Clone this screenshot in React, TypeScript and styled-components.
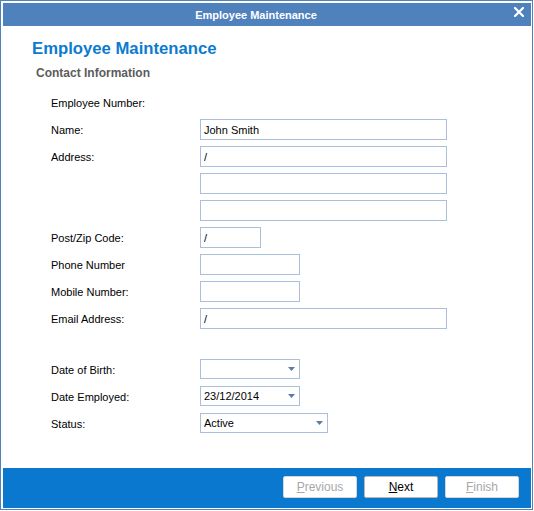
import React from 'react';
import styled, { createGlobalStyle } from 'styled-components';

const GlobalStyle = createGlobalStyle`
	html, body {
		margin: 0;
		padding: 0;
		background: #ffffff;
	}
	* {
		box-sizing: border-box;
	}
`;

const fields = [
	{ label: 'Employee Number:', type: 'none' },
	{ label: 'Name:', type: 'text', width: 247, value: 'John Smith' },
	{ label: 'Address:', type: 'text', width: 247, value: '/' },
	{ label: '', type: 'text', width: 247, value: '' },
	{ label: '', type: 'text', width: 247, value: '' },
	{ label: 'Post/Zip Code:', type: 'text', width: 61, value: '/' },
	{ label: 'Phone Number', type: 'text', width: 100, value: '' },
	{ label: 'Mobile Number:', type: 'text', width: 100, value: '' },
	{ label: 'Email Address:', type: 'text', width: 247, value: '/' },
];

const combos = [
	{ label: 'Date of Birth:', width: 100, value: '' },
	{ label: 'Date Employed:', width: 100, value: '23/12/2014' },
	{ label: 'Status:', width: 128, value: 'Active' },
];

export default function App() {
	return (
		<>
			<GlobalStyle />
			<Frame>
				<TitleBar>
					<TitleText>Employee Maintenance</TitleText>
					<CloseButton aria-label="Close">
						<svg width="10" height="10" viewBox="0 0 10 10">
							<path d="M1 1 L9 9 M9 1 L1 9" stroke="#ffffff" strokeWidth="2.2" strokeLinecap="square" />
						</svg>
					</CloseButton>
				</TitleBar>
				<Body>
					<Heading>Employee Maintenance</Heading>
					<SubHeading>Contact Information</SubHeading>
					<Form $top={12}>
						{fields.map((f, i) => (
							<React.Fragment key={i}>
								<Label>{f.label}</Label>
								<Cell>
									{f.type === 'text' && (
										<TextBox $width={f.width!} defaultValue={f.value} readOnly />
									)}
								</Cell>
							</React.Fragment>
						))}
					</Form>
					<Form $top={30}>
						{combos.map((c, i) => (
							<React.Fragment key={'c' + i}>
								<Label>{c.label}</Label>
								<Cell>
									<Combo $width={c.width}>
										<ComboText>{c.value}</ComboText>
										<ComboArrow>
											<svg width="7" height="4" viewBox="0 0 7 4">
												<path d="M0 0 H7 L3.5 4 Z" fill="#5d7ba6" />
											</svg>
										</ComboArrow>
									</Combo>
								</Cell>
							</React.Fragment>
						))}
					</Form>
				</Body>
				<Footer>
					<WizardButton disabled>
						<u>P</u>revious
					</WizardButton>
					<WizardButton>
						<u>N</u>ext
					</WizardButton>
					<WizardButton disabled>
						<u>F</u>inish
					</WizardButton>
				</Footer>
			</Frame>
		</>
	);
}

const Frame = styled.div`
	width: 533px;
	height: 510px;
	border: 1px solid #4f81bd;
	padding: 2px 1px 1px 2px;
	display: flex;
	flex-direction: column;
	background: #ffffff;
`;

const TitleBar = styled.div`
	position: relative;
	height: 23px;
	flex: none;
	background: #4f81bd;
	display: flex;
	align-items: center;
	justify-content: center;
	padding-right: 22px;
`;

const TitleText = styled.div`
	font-family: 'Liberation Sans', Arial, sans-serif;
	font-weight: bold;
	font-size: 11px;
	color: #ffffff;
`;

const CloseButton = styled.div`
	position: absolute;
	right: 7px;
	top: 4px;
	width: 10px;
	height: 10px;
	display: flex;
`;

const Body = styled.div`
	flex: 1;
	display: flex;
	flex-direction: column;
	padding: 13px 0 0 29px;
`;

const Heading = styled.div`
	font-family: 'Liberation Sans', Arial, sans-serif;
	font-weight: bold;
	font-size: 16.7px;
	line-height: 20px;
	color: #0b7bd0;
`;

const SubHeading = styled.div`
	margin: 7px 0 0 4px;
	font-family: 'Liberation Sans', Arial, sans-serif;
	font-weight: bold;
	font-size: 12px;
	line-height: 14px;
	color: #5c5c5c;
`;

const Form = styled.div<{ $top: number }>`
	margin: ${(p) => p.$top}px 0 0 19px;
	display: grid;
	grid-template-columns: 149px 1fr;
	grid-auto-rows: 21px;
	row-gap: 6px;
`;

const Label = styled.div`
	display: flex;
	align-items: center;
	font-family: 'Liberation Sans', Arial, sans-serif;
	font-size: 11px;
	color: #000000;
`;

const Cell = styled.div`
	display: flex;
	align-items: stretch;
`;

const TextBox = styled.input<{ $width: number }>`
	width: ${(p) => p.$width}px;
	height: 21px;
	margin: 0;
	border: 1px solid #a9bfdc;
	border-radius: 0;
	padding: 0 3px;
	font-family: 'Liberation Sans', Arial, sans-serif;
	font-size: 11px;
	color: #000000;
	background: #ffffff;
	outline: none;
`;

const Combo = styled.div<{ $width: number }>`
	width: ${(p) => p.$width}px;
	height: 20px;
	border: 1px solid #a9bfdc;
	display: flex;
	align-items: center;
	background: #ffffff;
`;

const ComboText = styled.div`
	flex: 1;
	padding-left: 3px;
	font-family: 'Liberation Sans', Arial, sans-serif;
	font-size: 11px;
	color: #000000;
`;

const ComboArrow = styled.div`
	width: 16px;
	height: 100%;
	display: flex;
	align-items: center;
	justify-content: center;
`;

const Footer = styled.div`
	height: 40px;
	flex: none;
	background: #0a78cf;
	display: flex;
	justify-content: flex-end;
	align-items: flex-start;
	gap: 7px;
	padding: 8px 12px 0 0;
`;

const WizardButton = styled.button`
	width: 74px;
	height: 22px;
	margin: 0;
	padding: 0;
	background: #ffffff;
	border: 1px solid #b8b8b8;
	border-radius: 2px;
	font-family: 'Liberation Sans', Arial, sans-serif;
	font-size: 12px;
	color: #000000;

	&:disabled {
		color: #a8a8a8;
		border-color: #d6d6d6;
	}
`;
